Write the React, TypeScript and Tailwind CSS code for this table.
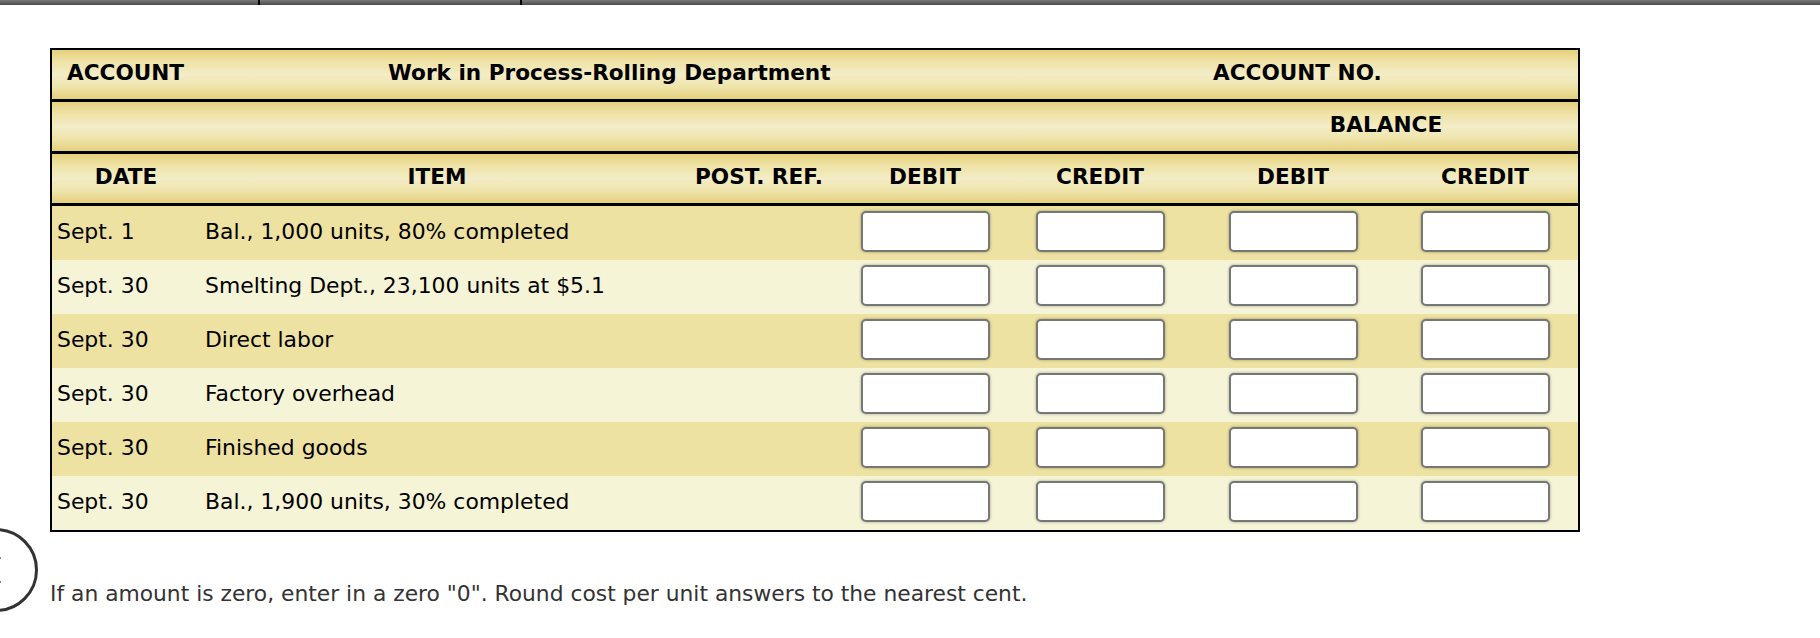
import React from 'react';

// Ledger rows for the Rolling Department account
const rows = [
  { date: 'Sept. 1', item: 'Bal., 1,000 units, 80% completed' },
  { date: 'Sept. 30', item: 'Smelting Dept., 23,100 units at $5.1' },
  { date: 'Sept. 30', item: 'Direct labor' },
  { date: 'Sept. 30', item: 'Factory overhead' },
  { date: 'Sept. 30', item: 'Finished goods' },
  { date: 'Sept. 30', item: 'Bal., 1,900 units, 30% completed' },
];

const cols = 'grid grid-cols-[148px_474px_170px_162px_188px_198px_186px]';
const headBg =
  'bg-[linear-gradient(to_bottom,#e5d17d_0%,#efe3a8_25%,#f3edc7_50%,#efe4ab_75%,#e3cf7b_100%)]';

const AmountBox: React.FC = () => (
  <div className="flex items-center justify-center pb-[4px]">
    <input
      type="text"
      className="h-[41px] w-[129px] rounded-[5px] border-2 border-[#777777] bg-white shadow-[0_0_3px_rgba(0,0,0,0.35)] outline-none"
    />
  </div>
);

const App: React.FC = () => {
  return (
    <div className="relative h-[638px] w-[1820px] overflow-hidden bg-white font-['DejaVu_Sans',Verdana,sans-serif] text-black">
      {/* top tab strip */}
      <div className="flex h-[5px] w-full bg-[linear-gradient(to_bottom,#7a7a7a,#4a4a4a)]">
        <div className="w-[260px] border-r-2 border-black" />
        <div className="w-[262px] border-r-2 border-black" />
      </div>

      <div className="pl-[50px] pt-[43px]">
        <div className="w-[1530px] border-2 border-black">
          {/* account header */}
          <div className={`flex h-[49px] items-center pb-[2px] text-[21.6px] font-bold ${headBg}`}>
            <div className="w-[336px] pl-[15px]">ACCOUNT</div>
            <div className="w-[825px]">Work in Process-Rolling Department</div>
            <div>ACCOUNT NO.</div>
          </div>
          <div className="h-[3px] bg-black" />
          <div className={`${cols} h-[49px] items-center pb-[2px] text-[21.6px] font-bold ${headBg}`}>
            <div className="col-span-5" />
            <div className="col-span-2 text-center">BALANCE</div>
          </div>
          <div className="h-[3px] bg-black" />
          <div className={`${cols} h-[49px] items-center pb-[2px] text-center text-[21.6px] font-bold ${headBg}`}>
            <div>DATE</div>
            <div>ITEM</div>
            <div>POST. REF.</div>
            <div>DEBIT</div>
            <div>CREDIT</div>
            <div>DEBIT</div>
            <div>CREDIT</div>
          </div>
          <div className="h-[3px] bg-black" />

          {rows.map((row, idx) => (
            <div
              key={idx}
              className={`${cols} h-[54px] items-center text-[21.9px] ${
                idx % 2 === 0 ? 'bg-[#ede2a1]' : 'bg-[#f5f4d6]'
              }`}
            >
              <div className="pb-[2px] pl-[5px]">{row.date}</div>
              <div className="pb-[2px] pl-[5px]">{row.item}</div>
              <div />
              <AmountBox />
              <AmountBox />
              <AmountBox />
              <AmountBox />
            </div>
          ))}
        </div>

        <p className="mt-[46px] text-[21.8px] text-[#333333]">
          If an amount is zero, enter in a zero "0". Round cost per unit answers to the nearest cent.
        </p>
      </div>

      {/* previous-question button, mostly off the left edge */}
      <div className="absolute left-[-46px] top-[528px] flex h-[84px] w-[84px] items-center justify-end rounded-full border-[3px] border-[#333333] bg-white pr-[33px]">
        <svg width="16" height="30" viewBox="0 0 16 30" fill="none" stroke="#333333" strokeWidth="3">
          <path d="M14 2 L2 15 L14 28" />
        </svg>
      </div>
    </div>
  );
};

export default App;
